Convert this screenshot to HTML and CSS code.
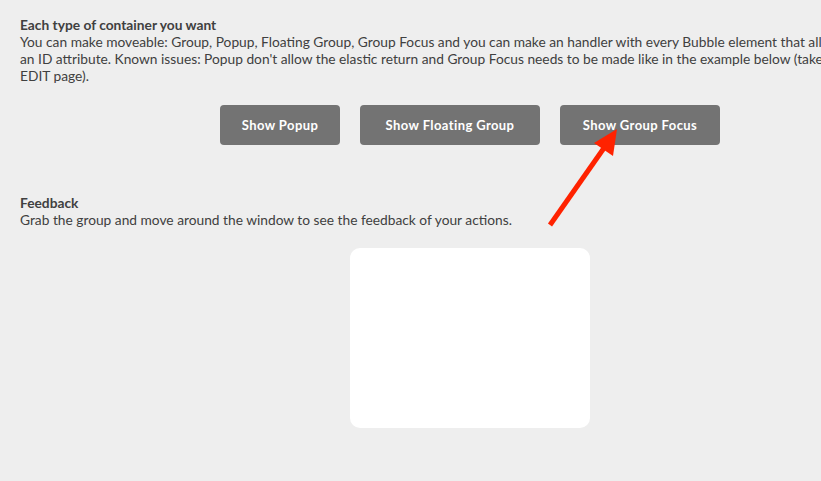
FILE: index.html
```html
<!DOCTYPE html>
<html>
  <head>
    <title>Moveable Elements</title>
    <link rel="stylesheet" href="styles.css">
  </head>
  <body>
    <div class="page">
      <div class="section intro">
        <div class="heading">Each type of container you want</div>
        <div class="text">
          You can make moveable: Group, Popup, Floating Group, Group Focus and you can make an handler with every Bubble element that allows<br>
          an ID attribute. Known issues: Popup don't allow the elastic return and Group Focus needs to be made like in the example below (take a look at the<br>
          EDIT page).
        </div>
      </div>

      <div class="buttons">
        <button class="btn btn-popup">Show Popup</button>
        <button class="btn btn-floating">Show Floating Group</button>
        <button class="btn btn-focus">Show Group Focus</button>
      </div>

      <div class="section feedback">
        <div class="heading">Feedback</div>
        <div class="text">Grab the group and move around the window to see the feedback of your actions.</div>
      </div>

      <div class="box-row">
        <div class="feedback-box"></div>
      </div>

      <svg class="arrow" width="821" height="481" viewBox="0 0 821 481">
        <line x1="550" y1="225" x2="604" y2="148" stroke="#ff2200" stroke-width="5" />
        <polygon points="617,129 594,143 613,156" fill="#ff2200" />
      </svg>
    </div>
  </body>
</html>
```

FILE: styles.css
```css
html,
body {
  margin: 0;
  padding: 0;
  background: #eeeeee;
  overflow: hidden;
}

body {
  font-family: Lato, "Open Sans", sans-serif;
  color: #404040;
  width: 821px;
  height: 481px;
}

.page {
  position: relative;
  height: 481px;
}

.section {
  padding-left: 20px;
  white-space: nowrap;
}

.intro {
  padding-top: 16px;
}

.heading {
  font-weight: bold;
  font-size: 13.75px;
  line-height: 17px;
}

.text {
  font-size: 13.75px;
  line-height: 17px;
}

.buttons {
  display: flex;
  gap: 20px;
  margin-top: 21px;
  padding-left: 220px;
}

.btn {
  height: 40px;
  border: none;
  border-radius: 4px;
  background: #737373;
  color: #ffffff;
  font-family: Lato, "Open Sans", sans-serif;
  font-weight: bold;
  font-size: 13px;
  letter-spacing: 0.4px;
  cursor: pointer;
  padding: 0;
}

.btn-popup {
  width: 120px;
}

.btn-floating {
  width: 180px;
}

.btn-focus {
  width: 160px;
}

.feedback {
  margin-top: 49px;
}

.box-row {
  padding-left: 350px;
  margin-top: 20px;
}

.feedback-box {
  width: 240px;
  height: 180px;
  background: #ffffff;
  border-radius: 10px;
}

.arrow {
  position: absolute;
  left: 0;
  top: 0;
  pointer-events: none;
}
```
